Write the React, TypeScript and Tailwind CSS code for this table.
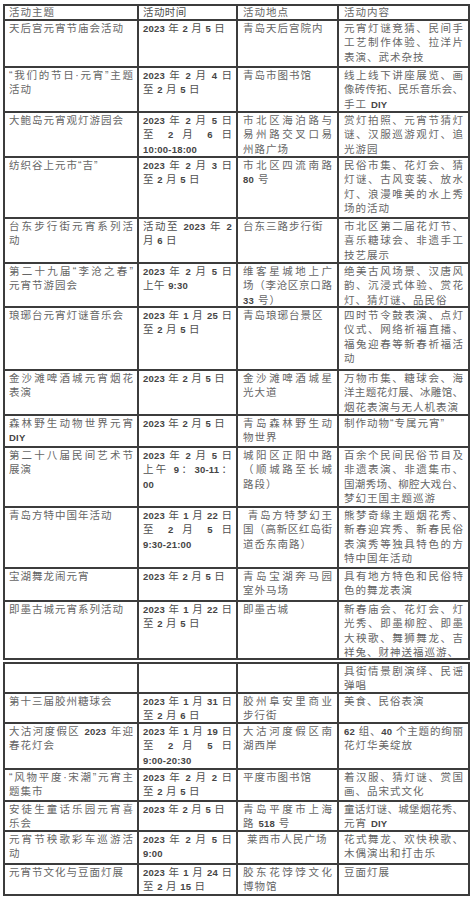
import React from "react";

const t1: string[][] = [
  ["活动主题", "活动时间", "活动地点", "活动内容"],
  ["天后宫元宵节庙会活动", "2023 年 2 月 5 日", "青岛天后宫院内", "元宵灯谜竞猜、民间手\n工艺制作体验、拉洋片\n表演、武术杂技"],
  ["“我们的节日·元宵”主题\n活动", "2023 年 2 月 4 日\n至 2 月 5 日", "青岛市图书馆", "线上线下讲座展览、画\n像砖传拓、民乐音乐会、\n手工 DIY"],
  ["大鲍岛元宵观灯游园会", "2023 年 2 月 5 日\n至 2 月 6 日\n10:00-18:00", "市北区海泊路与\n易州路交叉口易\n州路广场", "赏灯拍照、元宵节猜灯\n谜、汉服巡游观灯、追\n光游园"],
  ["纺织谷上元市“吉”", "2023 年 2 月 3 日\n至 2 月 5 日", "市北区四流南路\n80 号", "民俗市集、花灯会、猜\n灯谜、古风变装、放水\n灯、浪漫唯美的水上秀\n场的活动"],
  ["台东步行街元宵系列活\n动", "活动至 2023 年 2\n月 6 日", "台东三路步行街", "市北区第二届花灯节、\n喜乐糖球会、非遗手工\n技艺展示"],
  ["第二十九届“李沧之春”\n元宵节游园会", "2023 年 2 月 5 日\n上午 9:30", "维客星城地上广\n场（李沧区京口路\n33 号）", "绝美古风场景、汉唐风\n韵、沉浸式体验、赏花\n灯、猜灯谜、品民俗"],
  ["琅琊台元宵灯谜音乐会", "2023 年 1 月 25 日\n至 2 月 5 日", "青岛琅琊台景区", "四时节令鼓表演、点灯\n仪式、网络祈福直播、\n福兔迎春等新春祈福活\n动"],
  ["金沙滩啤酒城元宵烟花\n表演", "2023 年 2 月 5 日", "金沙滩啤酒城星\n光大道", "万物市集、糖球会、海\n洋主题花灯展、冰雕馆、\n烟花表演与无人机表演"],
  ["森林野生动物世界元宵\nDIY", "2023 年 2 月 5 日", "青岛森林野生动\n物世界", "制作动物“专属元宵”"],
  ["第二十八届民间艺术节\n展演", "2023 年 2 月 5 日\n上午 9：30-11：\n00", "城阳区正阳中路\n（顺城路至长城\n路段）", "百余个民间民俗节目及\n非遗表演、非遗集市、\n国潮秀场、柳腔大戏台、\n梦幻王国主题巡游"],
  ["青岛方特中国年活动", "2023 年 1 月 22 日\n至 2 月 5 日\n9:30-21:00", "\u00a0青岛方特梦幻王\n国（高新区红岛街\n道岙东南路）", "熊梦奇缘主题烟花秀、\n新春迎宾秀、新春民俗\n表演秀等独具特色的方\n特中国年活动"],
  ["宝湖舞龙闹元宵", "2023 年 2 月 5 日", "青岛宝湖奔马园\n室外马场", "具有地方特色和民俗特\n色的舞龙表演"],
  ["即墨古城元宵系列活动", "2023 年 1 月 22 日\n至 2 月 5 日", "即墨古城", "新春庙会、花灯会、灯\n光秀、即墨柳腔、即墨\n大秧歌、舞狮舞龙、吉\n祥兔、财神送福巡游、"],
];

const t2: string[][] = [
  ["", "", "", "具街情景剧演绎、民谣\n弹唱"],
  ["第十三届胶州糖球会", "2023 年 1 月 31 日\n至 2 月 6 日", "胶州阜安里商业\n步行街", "美食、民俗表演"],
  ["大沽河度假区 2023 年迎\n春花灯会", "2023 年 1 月 19 日\n至 2 月 5 日\n9:00-20:30", "大沽河度假区南\n湖西岸", "62 组、40 个主题的绚丽\n花灯华美绽放"],
  ["“风物平度·宋潮”元宵主\n题集市", "2023 年 2 月 2 日\n至 2 月 5 日", "平度市图书馆", "着汉服、猜灯谜、赏国\n画、品宋式文化"],
  ["安徒生童话乐园元宵喜\n乐会", "2023 年 2 月 5 日", "青岛平度市上海\n路 518 号", "童话灯谜、城堡烟花秀、\n元宵 DIY"],
  ["元宵节秧歌彩车巡游活\n动", "2023 年 2 月 5 日\n9:00", "\u00a0莱西市人民广场", "花式舞龙、欢快秧歌、\n木偶演出和打击乐"],
  ["元宵节文化与豆面灯展", "2023 年 1 月 24 日\n至 2 月 15 日", "胶东花饽饽文化\n博物馆", "豆面灯展"],
];

function Rich({ text }: { text: string }) {
  const parts = text.split(/([A-Za-z0-9:\-]+)/);
  return (
    <>
      {parts.map((p, i) =>
        i % 2 === 1 ? (
          <span key={i} className="font-bold text-[9.5px] tracking-[0.2px] text-[#454545]">
            {p}
          </span>
        ) : (
          <span key={i}>{p}</span>
        )
      )}
    </>
  );
}

function Cell({ text, col, header }: { text: string; col: number; header?: boolean }) {
  const lines = text ? text.split("\n") : [];
  const pad = col < 2 ? "pl-[4px] pr-[4px]" : "pl-[5px] pr-[5px]";
  const color = col === 1 ? "text-[#4f4f4f]" : "text-[#666666]";
  const lastTrack = col === 1 ? "tracking-[0.4px]" : "tracking-[1px]";
  return (
    <div className={`bg-white overflow-visible ${pad} ${color}`}>
      {lines.map((l, i) => {
        const last = i === lines.length - 1;
        const h = header ? "h-[13px] leading-[13px]" : "h-[14.3px] leading-[14.3px]";
        return (
          <div
            key={i}
            className={
              last
                ? `${h} whitespace-nowrap ${lastTrack}`
                : `${h} tracking-normal text-justify [text-align-last:justify]`
            }
          >
            <Rich text={l} />
          </div>
        );
      })}
    </div>
  );
}

export default function App() {
  return (
    <div className="w-[474px] h-[901px] bg-white overflow-hidden pl-[3px] pt-[4px] font-['Liberation_Sans','Noto_Sans_CJK_SC',sans-serif] text-[10.5px]">
      <div className="grid w-[467px] grid-cols-[132px_97px_99px_129px] grid-rows-[13px_45px_43px_43px_59px_43px_42px_61px_43px_30px_58px_59px_31px_56px] gap-[2px] bg-[#3c3c3c] p-[2px]">
        {t1.map((row, r) =>
          row.map((c, ci) => <Cell key={`${r}-${ci}`} text={c} col={ci} header={r === 0} />)
        )}
      </div>
      <div className="mt-[2px] grid w-[467px] grid-cols-[132px_97px_99px_129px] grid-rows-[28px_28px_44px_30px_28px_31px_29px] gap-[2px] bg-[#3c3c3c] p-[2px]">
        {t2.map((row, r) =>
          row.map((c, ci) => <Cell key={`${r}-${ci}`} text={c} col={ci} />)
        )}
      </div>
    </div>
  );
}
